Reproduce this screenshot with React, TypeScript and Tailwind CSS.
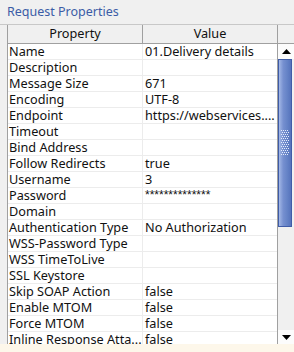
import React from "react";

const ROWS: [string, string][] = [
  ["Name", "01.Delivery details"],
  ["Description", ""],
  ["Message Size", "671"],
  ["Encoding", "UTF-8"],
  ["Endpoint", "https://webservices...."],
  ["Timeout", ""],
  ["Bind Address", ""],
  ["Follow Redirects", "true"],
  ["Username", "3"],
  ["Password", "**************"],
  ["Domain", ""],
  ["Authentication Type", "No Authorization"],
  ["WSS-Password Type", ""],
  ["WSS TimeToLive", ""],
  ["SSL Keystore", ""],
  ["Skip SOAP Action", "false"],
  ["Enable MTOM", "false"],
  ["Force MTOM", "false"],
  ["Inline Response Atta...", "false"],
];

function Grip() {
  const dots = [];
  for (let r = 0; r < 13; r++) {
    for (let c = 0; c < 4; c++) {
      dots.push(<rect key={r + "-" + c} x={c * 2 + (r % 2)} y={r * 2} width="1" height="1" fill="#e6ecfa" />);
    }
  }
  return (
    <svg width="9" height="26" viewBox="0 0 9 26">
      {dots}
    </svg>
  );
}

function ScrollBar() {
  return (
    <div className="w-[17px] shrink-0 flex flex-col bg-[#f0f0f0] border-l border-[#a0a0a0]">
      <div className="h-[19px] shrink-0 border-b border-[#a0a0a0]" />
      <div className="h-[15px] shrink-0 flex items-center justify-center bg-[#fcfcfc]">
        <svg width="9" height="5" viewBox="0 0 9 5">
          <path d="M4.5 0 L9 5 L0 5 Z" fill="#000" />
        </svg>
      </div>
      <div className="h-[168px] w-[14px] shrink-0 bg-[#6d89cb] bg-[linear-gradient(90deg,#a3b8e6_0%,#7690d0_35%,#6482c6_70%,#5673bc_100%)] border border-[#3f5ca8] flex items-center justify-center">
        <Grip />
      </div>
      <div className="flex-1" />
      <div className="h-[14px] shrink-0 flex items-center justify-center bg-[#fcfcfc]">
        <svg width="9" height="5" viewBox="0 0 9 5">
          <path d="M0 0 L9 0 L4.5 5 Z" fill="#000" />
        </svg>
      </div>
    </div>
  );
}

export default function App() {
  return (
    <div
      className="w-[294px] h-[352px] bg-[#f0f0f0] flex flex-col overflow-hidden text-[12.7px] text-[#111]"
      style={{ fontFamily: '"Noto Sans", "Liberation Sans", sans-serif' }}
    >
      <div className="h-[25px] shrink-0 flex items-center pl-[7px] text-[12.5px] text-[#3b5ca6] border-b border-[#c8c8c8]">
        Request Properties
      </div>
      <div className="flex-1 min-h-0 flex ml-[7px]">
        <div className="flex-1 min-w-0 flex flex-col border-l border-[#a0a0a0] bg-white overflow-hidden">
          <div className="h-[19px] shrink-0 flex bg-[#f0f0f0] border-b border-[#a0a0a0]">
            <div className="w-[135px] flex items-center justify-center border-r border-[#a0a0a0]">
              Property
            </div>
            <div className="flex-1 flex items-center justify-center">Value</div>
          </div>
          {ROWS.map(([k, v]) => (
            <div key={k} className="h-[16px] shrink-0 flex border-b border-[#ececec] leading-[15px]">
              <div className="w-[135px] pl-[1px] border-r border-[#ececec] whitespace-nowrap">
                {k}
              </div>
              <div
                className={
                  k === "Password"
                    ? "flex-1 pl-[2px] whitespace-nowrap text-[12px] font-['Liberation_Sans']"
                    : "flex-1 pl-[2px] whitespace-nowrap"
                }
              >
                {v}
              </div>
            </div>
          ))}
        </div>
        <ScrollBar />
      </div>
      <div className="h-[8px] shrink-0 bg-[#fdf7ea]" />
    </div>
  );
}
